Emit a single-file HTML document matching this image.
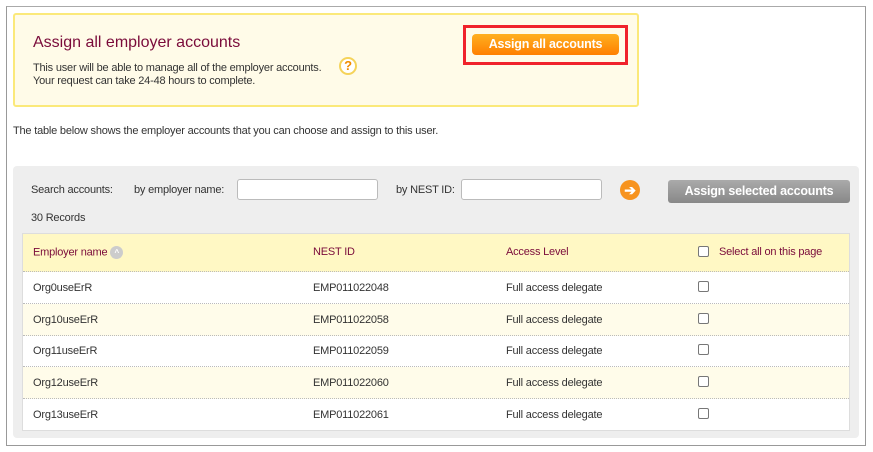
<!DOCTYPE html>
<html><head><style>
*{box-sizing:border-box;margin:0;padding:0}
body{width:873px;height:452px;background:#fff;font-family:"Liberation Sans",sans-serif;font-size:11px;color:#333;position:relative;overflow:hidden;letter-spacing:-0.2px}
.abs{position:absolute}
.outer{left:6px;top:6px;width:860px;height:440px;border:1px solid #999;border-top-color:#aaa}
.yel{left:13px;top:13px;width:626px;height:94px;background:#fffbe8;border:2px solid #fbe97a;border-radius:3px}
h1{font-weight:normal;font-size:16px;color:#7a0b3a;letter-spacing:0}
.btn{left:472px;top:34px;width:147px;height:21px;border-radius:4px;background:linear-gradient(#ffb020,#ff7f00);color:#fff;font-weight:bold;font-size:12.5px;text-align:center;line-height:21px}
.red{left:463px;top:25px;width:165px;height:40px;border:3px solid #f0232b}
.q{left:339px;top:57px;width:18px;height:18px;border-radius:50%;border:2px solid #f5d35a;background:#fff;color:#f08c00;font-weight:bold;font-size:13px;text-align:center;line-height:14px}
.gray{left:13px;top:166px;width:846px;height:272px;background:#eee;border-radius:4px}
input{position:absolute;height:21px;border:1px solid #bbb;border-radius:3px;background:#fff}
.gbtn{left:668px;top:180px;width:182px;height:23px;border-radius:3px;background:linear-gradient(#aaa,#888);color:#fff;font-weight:bold;font-size:12.5px;text-align:center;line-height:23px}
.arr{left:620px;top:180px;width:20px;height:20px;border-radius:50%;background:#f7931e;color:#fff;font-weight:bold;text-align:center;line-height:20px;font-size:14px}
.tbl{left:22px;top:233px;width:828px;height:198px;border:1px solid #ddd;background:#fff;overflow:hidden}
.row{position:absolute;left:0;width:826px;height:32px;border-bottom:1px dotted #bbb}
.row span{position:absolute;top:10px}
.c1{left:10px}.c2{left:290px}.c3{left:483px}
.cb{position:absolute;left:675px;top:9px;width:11px;height:11px;border:1px solid #777;border-radius:2px;background:#fff}
.hd{color:#7a0b3a;background:#fff8c4;height:38px}
.hd span{top:12px}
</style></head><body>
<div class="abs outer"></div>
<div class="abs yel"></div>
<h1 class="abs" style="left:33px;top:34px">Assign all employer accounts</h1>
<div class="abs" style="left:33px;top:62px;line-height:13px">This user will be able to manage all of the employer accounts.<br>Your request can take 24-48 hours to complete.</div>
<div class="abs q">?</div>
<div class="abs red"></div>
<div class="abs btn">Assign all accounts</div>
<div class="abs" style="left:13px;top:125px">The table below shows the employer accounts that you can choose and assign to this user.</div>
<div class="abs gray"></div>
<div class="abs" style="left:31px;top:184px">Search accounts:</div>
<div class="abs" style="left:134px;top:184px">by employer name:</div>
<input style="left:237px;top:179px;width:141px">
<div class="abs" style="left:396px;top:184px">by NEST ID:</div>
<input style="left:461px;top:179px;width:141px">
<div class="abs arr">➔</div>
<div class="abs gbtn">Assign selected accounts</div>
<div class="abs" style="left:31px;top:212px">30 Records</div>
<div class="abs tbl">
<div class="row hd" style="top:0"><span class="c1">Employer name <b style="display:inline-block;width:13px;height:13px;border-radius:50%;background:#ccc;color:#fff;font-size:8px;text-align:center;line-height:13px;vertical-align:middle">^</b></span><span class="c2">NEST ID</span><span class="c3">Access Level</span><div class="cb" style="top:12px"></div><span style="left:696px">Select all on this page</span></div>
<div class="row" style="top:38px"><span class="c1">Org0useErR</span><span class="c2">EMP011022048</span><span class="c3">Full access delegate</span><div class="cb"></div></div>
<div class="row" style="top:70px;background:#fffcea"><span class="c1">Org10useErR</span><span class="c2">EMP011022058</span><span class="c3">Full access delegate</span><div class="cb"></div></div>
<div class="row" style="top:101px"><span class="c1">Org11useErR</span><span class="c2">EMP011022059</span><span class="c3">Full access delegate</span><div class="cb"></div></div>
<div class="row" style="top:133px;background:#fffcea"><span class="c1">Org12useErR</span><span class="c2">EMP011022060</span><span class="c3">Full access delegate</span><div class="cb"></div></div>
<div class="row" style="top:165px"><span class="c1">Org13useErR</span><span class="c2">EMP011022061</span><span class="c3">Full access delegate</span><div class="cb"></div></div>
</div>
</body></html>
